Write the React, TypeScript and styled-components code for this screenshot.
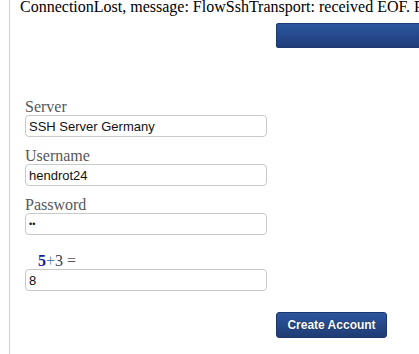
import styled, { createGlobalStyle } from 'styled-components';

const GlobalStyle = createGlobalStyle`
  html, body {
    margin: 0;
    padding: 0;
    background: #fff;
    overflow: hidden;
  }
`;

const Page = styled.div`
  margin-left: 9px;
  min-height: 354px;
  border-left: 1px solid #d0d0d0;
  padding-left: 10px;
  font-family: 'Liberation Serif', 'Times New Roman', serif;
  overflow: hidden;
`;

const Message = styled.div`
  font-size: 16px;
  line-height: 14px;
  color: #000;
  white-space: nowrap;
`;

const TopBar = styled.div`
  margin: 9px 0 0 256px;
  width: 200px;
  height: 25px;
  border-radius: 3px;
  background: linear-gradient(#2d579f, #1f3c78);
  box-shadow: inset 0 0 0 1px #1d3a73;
`;

const Form = styled.form`
  margin-top: 50px;
  padding-left: 5px;
  display: flex;
  flex-direction: column;
`;

const Field = styled.div<{ $gap?: number }>`
  display: flex;
  flex-direction: column;
  margin-top: ${(p) => p.$gap ?? 10}px;
`;

const Label = styled.label`
  font-size: 16px;
  line-height: 17px;
  color: #575757;
`;

const Input = styled.input`
  box-sizing: border-box;
  width: 242px;
  height: 22px;
  padding: 0 3px;
  border: 1px solid #c9c9c9;
  border-radius: 4px;
  font-family: 'Liberation Sans', Arial, sans-serif;
  font-size: 13px;
  color: #111;
  outline: none;
`;

const PasswordInput = styled(Input)`
  font-size: 9px;
`;

const Captcha = styled.div`
  padding-left: 13px;
  font-size: 16px;
  line-height: 17px;
  color: #555;
`;

const Digit = styled.span<{ $color: string; $bold?: boolean }>`
  color: ${(p) => p.$color};
  font-weight: ${(p) => (p.$bold ? 700 : 400)};
`;

const Actions = styled.div`
  margin-top: 21px;
  padding-left: 251px;
`;

const Button = styled.button`
  width: 111px;
  height: 26px;
  border: 1px solid #1c3670;
  border-radius: 3px;
  background: linear-gradient(#2d569d, #1f3b74);
  color: #fff;
  font-family: 'Liberation Sans', Arial, sans-serif;
  font-size: 12px;
  font-weight: 700;
  text-shadow: 0 0 1px #0a1a3a;
  padding: 0;
  cursor: pointer;
`;

export default function App() {
  return (
    <>
      <GlobalStyle />
      <Page>
        <Message>ConnectionLost, message: FlowSshTransport: received EOF. Please try again later.</Message>
        <TopBar />
        <Form onSubmit={(e) => e.preventDefault()}>
          <Field $gap={0}>
            <Label>Server</Label>
            <Input defaultValue="SSH Server Germany" />
          </Field>
          <Field>
            <Label>Username</Label>
            <Input defaultValue="hendrot24" />
          </Field>
          <Field>
            <Label>Password</Label>
            <PasswordInput type="password" defaultValue="ab" />
          </Field>
          <Field $gap={17}>
            <Captcha>
              <Digit $color="#1b1b8f" $bold>5</Digit>
              <Digit $color="#5b7fa6">+</Digit>
              <Digit $color="#36405c">3</Digit> =
            </Captcha>
            <Input defaultValue="8" />
          </Field>
          <Actions>
            <Button type="submit">Create Account</Button>
          </Actions>
        </Form>
      </Page>
    </>
  );
}
